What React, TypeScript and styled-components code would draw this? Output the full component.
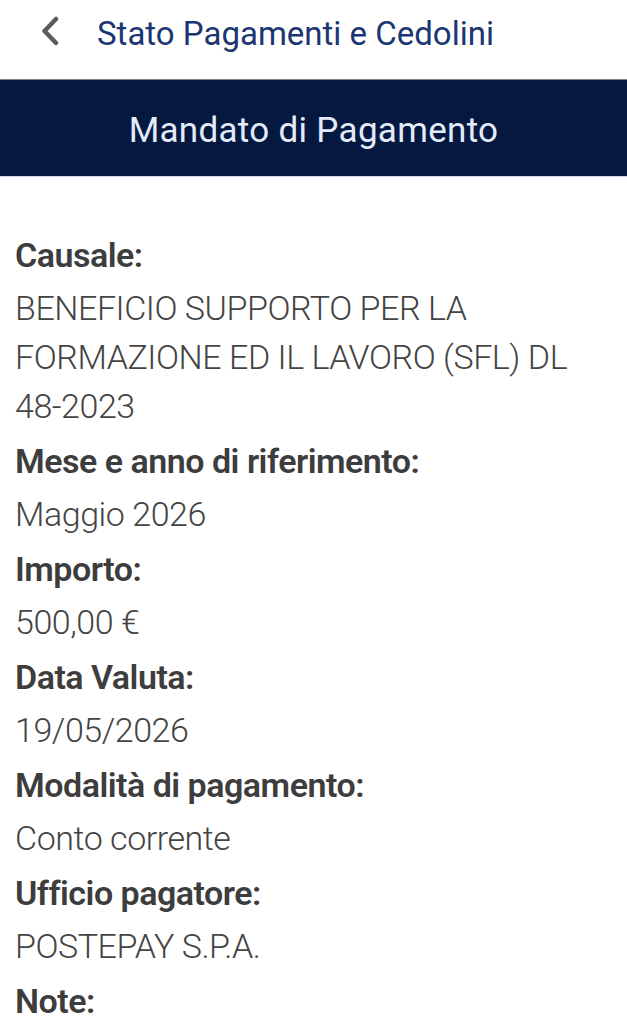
import React from "react";
import styled, { createGlobalStyle } from "styled-components";

const Global = createGlobalStyle`
  html, body { margin: 0; padding: 0; background: #ffffff; }
  body { font-family: Roboto, "Noto Sans", sans-serif; }
`;

const Page = styled.div`
  width: 627px;
  min-height: 1024px;
  background: #fff;
  display: flex;
  flex-direction: column;
`;

const TopBar = styled.div`
  height: 79px;
  display: flex;
  align-items: center;
  padding-left: 36px;
  gap: 33px;
  box-sizing: border-box;
  padding-bottom: 12px;
`;

const Back = styled.div`
  width: 28px;
  height: 30px;
  display: flex;
  align-items: center;
  justify-content: center;
  margin-bottom: 6px;
`;

const TopTitle = styled.div`
  font-size: 33px;
  color: #1b3671;
  letter-spacing: 0;
`;

const Band = styled.div`
  height: 98px;
  background: #051840;
  border-top: 1px solid #7d8490;
  border-bottom: 1px solid #c9d4e6;
  display: flex;
  align-items: center;
  justify-content: center;
  box-sizing: border-box;
`;

const BandTitle = styled.div`
  font-size: 35px;
  color: #e4ebf8;
  letter-spacing: 0.3px;
  padding-top: 4px;
`;

const Content = styled.div`
  padding: 52px 15px 0;
  display: flex;
  flex-direction: column;
`;

const Label = styled.div`
  font-size: 34px;
  font-weight: 600;
  color: #3d3d3d;
  line-height: 53px;
  letter-spacing: -0.5px;
`;

const Value = styled.div`
  font-size: 34px;
  font-weight: 300;
  color: #444;
  line-height: 49px;
  margin: 2px 0 4px;
  letter-spacing: -0.45px;
`;

const rows: [string, string][] = [
  ["Causale:", "BENEFICIO SUPPORTO PER LA FORMAZIONE ED IL LAVORO (SFL) DL 48-2023"],
  ["Mese e anno di riferimento:", "Maggio 2026"],
  ["Importo:", "500,00 €"],
  ["Data Valuta:", "19/05/2026"],
  ["Modalità di pagamento:", "Conto corrente"],
  ["Ufficio pagatore:", "POSTEPAY S.P.A."],
  ["Note:", ""],
];

export default function App() {
  return (
    <Page>
      <Global />
      <TopBar>
        <Back>
          <svg width="22" height="30" viewBox="0 0 22 30" fill="none">
            <path d="M17 3 L5.5 15 L17 27" stroke="#5c5c5c" strokeWidth="4.5" strokeLinecap="round" strokeLinejoin="round" />
          </svg>
        </Back>
        <TopTitle>Stato Pagamenti e Cedolini</TopTitle>
      </TopBar>
      <Band>
        <BandTitle>Mandato di Pagamento</BandTitle>
      </Band>
      <Content>
        {rows.map(([l, v]) => (
          <React.Fragment key={l}>
            <Label>{l}</Label>
            {v && <Value>{v}</Value>}
          </React.Fragment>
        ))}
      </Content>
    </Page>
  );
}
